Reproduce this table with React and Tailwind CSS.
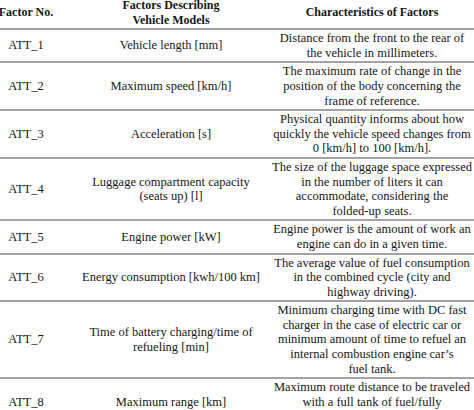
const ROWS = [
    { no: 'ATT_1', name: ['Vehicle length [mm]'], desc: ['Distance from the front to the rear of', 'the vehicle in millimeters.'] },
    { no: 'ATT_2', name: ['Maximum speed [km/h]'], desc: ['The maximum rate of change in the', 'position of the body concerning the', 'frame of reference.'] },
    { no: 'ATT_3', name: ['Acceleration [s]'], desc: ['Physical quantity informs about how', 'quickly the vehicle speed changes from', '0 [km/h] to 100 [km/h].'] },
    { no: 'ATT_4', name: ['Luggage compartment capacity', '(seats up) [l]'], desc: ['The size of the luggage space expressed', 'in the number of liters it can', 'accommodate, considering the', 'folded-up seats.'] },
    { no: 'ATT_5', name: ['Engine power [kW]'], desc: ['Engine power is the amount of work an', 'engine can do in a given time.'] },
    { no: 'ATT_6', name: ['Energy consumption [kwh/100 km]'], desc: ['The average value of fuel consumption', 'in the combined cycle (city and', 'highway driving).'] },
    { no: 'ATT_7', name: ['Time of battery charging/time of', 'refueling [min]'], desc: ['Minimum charging time with DC fast', 'charger in the case of electric car or', 'minimum amount of time to refuel an', 'internal combustion engine car\u2019s', 'fuel tank.'] },
    { no: 'ATT_8', name: ['Maximum range [km]'], desc: ['Maximum route distance to be traveled', 'with a full tank of fuel/fully', 'charged battery.'] },
];

const Cell = ({ lines }) => (
    <div className="flex flex-col items-center justify-center">
        {lines.map((l, i) => (
            <span key={i} className="whitespace-nowrap">{l}</span>
        ))}
    </div>
);

const App = () => {
    return (
        <div className="h-[410px] w-[474px] overflow-hidden bg-white text-[#161616]"
             style={{ fontFamily: '"Liberation Serif", "Times New Roman", serif' }}>
            <div className="-mt-[3px] -ml-[16px] w-[490px] text-[12.5px] leading-[14.6px]">
                <div className="grid grid-cols-[84px_206px_196px] border-b-2 border-[#a3a3a3] py-[1px] text-[12px] font-bold">
                    <Cell lines={['Factor No.']} />
                    <Cell lines={['Factors Describing', 'Vehicle Models']} />
                    <Cell lines={['Characteristics of Factors']} />
                </div>
                {ROWS.map((r) => (
                    <div key={r.no} className="grid grid-cols-[84px_206px_196px] border-b-2 border-[#a3a3a3] py-[1px]">
                        <Cell lines={[r.no]} />
                        <Cell lines={r.name} />
                        <Cell lines={r.desc} />
                    </div>
                ))}
            </div>
        </div>
    );
};

export default App;
